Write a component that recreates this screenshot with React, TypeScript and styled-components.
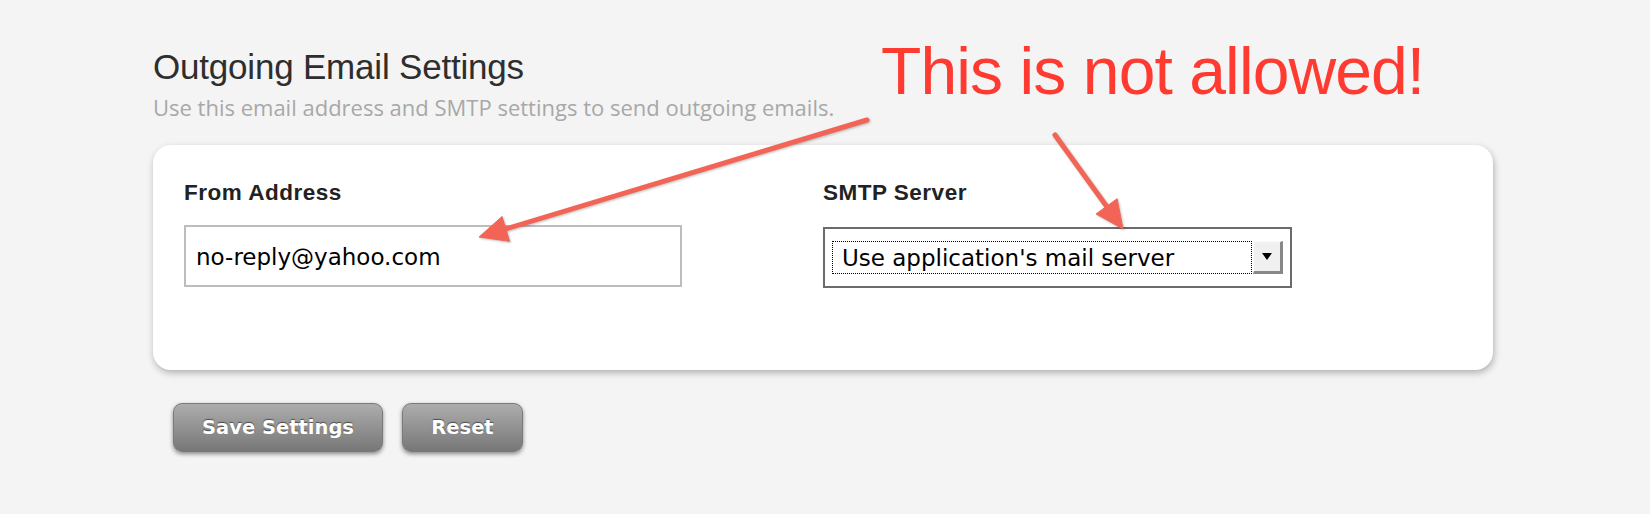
import styled, { createGlobalStyle } from 'styled-components';

const GlobalStyle = createGlobalStyle`
  html, body {
    margin: 0;
    padding: 0;
    background: #f4f4f4;
  }
  body {
    width: 1650px;
    height: 514px;
    overflow: hidden;
    font-family: 'Liberation Sans', Arial, sans-serif;
  }
`;

const Page = styled.div`
  position: relative;
  width: 1650px;
  height: 514px;
  box-sizing: border-box;
  padding: 49px 0 0 153px;
`;

const Title = styled.h1`
  margin: 0;
  font-family: 'Liberation Sans', Arial, sans-serif;
  font-weight: normal;
  font-size: 35px;
  line-height: 1;
  color: #2e2e2e;
  letter-spacing: -0.2px;
`;

const Subtitle = styled.p`
  margin: 12px 0 0;
  font-family: 'Open Sans', sans-serif;
  font-size: 22px;
  line-height: 1;
  color: #a8a8a8;
`;

const Card = styled.div`
  margin-top: 27px;
  width: 1340px;
  height: 225px;
  box-sizing: border-box;
  padding: 37px 0 0 31px;
  background: #fff;
  border-radius: 18px;
  box-shadow: 1px 3px 7px rgba(0, 0, 0, 0.28);
  display: grid;
  grid-template-columns: 639px 1fr;
  align-items: start;
`;

const Field = styled.div`
  display: flex;
  flex-direction: column;
  align-items: flex-start;
`;

const Label = styled.label<{ $gap: number }>`
  font-family: 'Liberation Sans', Arial, sans-serif;
  font-weight: bold;
  font-size: 22.5px;
  line-height: 1;
  letter-spacing: 0.5px;
  color: #222;
  margin-bottom: ${(p) => p.$gap}px;
`;

const TextInput = styled.input`
  width: 498px;
  height: 62px;
  box-sizing: border-box;
  margin: 0;
  padding: 2px 10px 0;
  border: 2px solid #bdbdbd;
  background: #fff;
  font-family: 'DejaVu Sans', sans-serif;
  font-size: 23px;
  color: #000;
  outline: none;
`;

const SelectBox = styled.div`
  width: 469px;
  height: 61px;
  box-sizing: border-box;
  padding: 12px 7px;
  border: 2px solid #6b6b6b;
  background: #fff;
  display: flex;
  align-items: stretch;
  gap: 1px;
`;

const SelectValue = styled.div`
  flex: 1;
  border: 1px dotted #000;
  padding: 2px 0 0 9px;
  display: flex;
  align-items: center;
  font-family: 'DejaVu Sans', sans-serif;
  font-size: 23px;
  color: #000;
  white-space: nowrap;
`;

const DropButton = styled.div`
  width: 30px;
  box-sizing: border-box;
  background: #f0f0f0;
  border-top: 1px solid #fbfbfb;
  border-left: 1px solid #fbfbfb;
  border-right: 3px solid #888;
  border-bottom: 3px solid #888;
  display: flex;
  align-items: center;
  justify-content: center;

  &::after {
    content: '';
    width: 0;
    height: 0;
    border-left: 5px solid transparent;
    border-right: 5px solid transparent;
    border-top: 7px solid #000;
  }
`;

const Actions = styled.div`
  display: flex;
  gap: 19px;
  margin: 33px 0 0 20px;
`;

const Button = styled.button<{ $width: number }>`
  width: ${(p) => p.$width}px;
  height: 49px;
  padding: 0;
  border: 1px solid #7a7a7a;
  border-radius: 9px;
  background: linear-gradient(#adadad, #777);
  box-shadow: 0 2px 4px rgba(0, 0, 0, 0.45);
  font-family: 'DejaVu Sans', sans-serif;
  font-weight: bold;
  font-size: 19.5px;
  color: #fff;
  text-shadow: 0 -1px 1px rgba(0, 0, 0, 0.5);
  cursor: pointer;
`;

const Callout = styled.div`
  position: absolute;
  left: 881px;
  top: 38px;
  font-family: 'Liberation Sans', Arial, sans-serif;
  font-size: 66px;
  line-height: 1;
  letter-spacing: -0.9px;
  color: #ff3a31;
  white-space: nowrap;
`;

const Overlay = styled.svg`
  position: absolute;
  left: 0;
  top: 0;
  pointer-events: none;
  filter: drop-shadow(1px 1px 1px rgba(0, 0, 0, 0.25));
`;

type Arrow = { x1: number; y1: number; x2: number; y2: number };

const arrows: Arrow[] = [
  { x1: 867, y1: 120, x2: 479, y2: 237 },
  { x1: 1055, y1: 135, x2: 1123, y2: 229 },
];

const ArrowShape = ({ x1, y1, x2, y2 }: Arrow) => {
  const dx = x2 - x1;
  const dy = y2 - y1;
  const len = Math.hypot(dx, dy);
  const ux = dx / len;
  const uy = dy / len;
  const head = 28;
  const half = 13;
  const bx = x2 - ux * head;
  const by = y2 - uy * head;
  const pts = `${x2},${y2} ${bx - uy * half},${by + ux * half} ${bx + uy * half},${by - ux * half}`;
  return (
    <g fill="#f26556" stroke="#f26556">
      <line x1={x1} y1={y1} x2={bx + ux * 4} y2={by + uy * 4} strokeWidth={5} strokeLinecap="round" />
      <polygon points={pts} strokeWidth={1} strokeLinejoin="round" />
    </g>
  );
};

const App = () => {
  return (
    <>
      <GlobalStyle />
      <Page>
        <Title>Outgoing Email Settings</Title>
        <Subtitle>Use this email address and SMTP settings to send outgoing emails.</Subtitle>
        <Card>
          <Field>
            <Label $gap={20}>From Address</Label>
            <TextInput defaultValue="no-reply@yahoo.com" />
          </Field>
          <Field>
            <Label $gap={22}>SMTP Server</Label>
            <SelectBox>
              <SelectValue>Use application's mail server</SelectValue>
              <DropButton />
            </SelectBox>
          </Field>
        </Card>
        <Actions>
          <Button $width={210}>Save Settings</Button>
          <Button $width={121}>Reset</Button>
        </Actions>
        <Callout>This is not allowed!</Callout>
        <Overlay width={1650} height={514} viewBox="0 0 1650 514">
          {arrows.map((a, i) => (
            <ArrowShape key={i} {...a} />
          ))}
        </Overlay>
      </Page>
    </>
  );
};

export default App;
